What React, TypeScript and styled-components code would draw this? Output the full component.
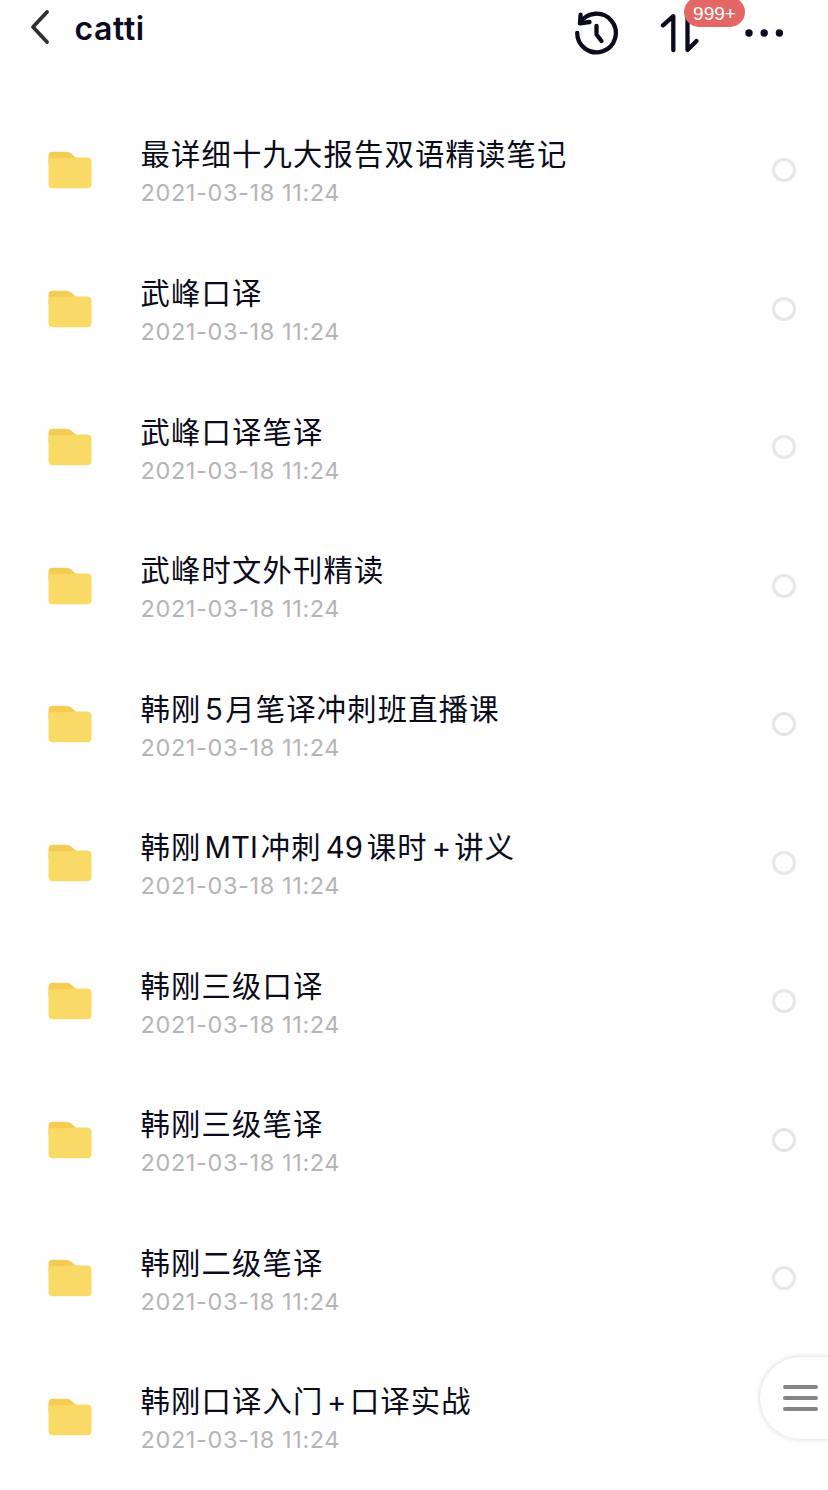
import React from 'react';
import styled, { createGlobalStyle } from 'styled-components';

const GlobalStyle = createGlobalStyle`
  * { box-sizing: border-box; }
  html, body { margin: 0; padding: 0; background: #fefefe; }
  body { font-family: Inter, "Noto Sans CJK SC", sans-serif; overflow: hidden; }
  button { border: 0; padding: 0; background: none; font: inherit; color: inherit; }
`;

const Screen = styled.div`
  width: 828px;
  height: 1490px;
  overflow: hidden;
  background: #fefefe;
`;

const Header = styled.header`
  display: flex;
  align-items: flex-start;
  height: 100.7px;
  padding: 0 44px 0 30px;
`;

const BackButton = styled.button`
  display: flex;
  width: 20px;
  height: 36px;
  margin: 9px 24.5px 0 0;
`;

const Title = styled.h1`
  flex: 1;
  margin: 0;
  padding-top: 8px;
  font-size: 32px;
  line-height: 42px;
  font-weight: 600;
  letter-spacing: 0.6px;
  color: #0b0b1f;
`;

const Actions = styled.div`
  display: flex;
  align-items: center;
  padding-top: 10px;
`;

const ActionButton = styled.button<{ $width: number; $gap?: number }>`
  position: relative;
  display: flex;
  width: ${p => p.$width}px;
  height: 46px;
  margin-left: ${p => p.$gap ?? 0}px;
`;

const Badge = styled.span`
  position: absolute;
  top: -13px;
  left: 24px;
  width: 61px;
  height: 30px;
  border-radius: 15px;
  background: #e36865;
  color: #fff;
  font-family: "Liberation Sans", Arial, sans-serif;
  font-size: 19px;
  line-height: 33px;
  text-align: center;
`;

const List = styled.ul`
  margin: 0;
  padding: 0;
  list-style: none;
`;

const Row = styled.li`
  display: flex;
  align-items: center;
  height: 138.56px;
  padding: 0 32px 0 48px;
`;

const FolderSvg = styled.svg`
  flex: none;
  width: 44px;
  height: 38px;
  margin-right: 48.5px;
`;

const Info = styled.div`
  flex: 1;
  display: flex;
  flex-direction: column;
  padding-top: 5px;
`;

const Name = styled.div`
  height: 42px;
  font-size: 29.3px;
  line-height: 43px;
  letter-spacing: 1.2px;
  white-space: nowrap;
  color: #0b0b1a;
`;

const Latin = styled.span<{ $before: number; $after: number }>`
  margin-left: ${p => p.$before}px;
  margin-right: ${p => p.$after}px;
  letter-spacing: 0;
`;

const DateText = styled.time`
  height: 36px;
  font-size: 23.5px;
  line-height: 36.6px;
  letter-spacing: 0.62px;
  color: #b4b5b7;
`;

const Radio = styled.span`
  width: 24px;
  height: 24px;
  border: 3px solid #e6e6e6;
  border-radius: 50%;
`;

const MenuButton = styled.button`
  position: absolute;
  top: 1357px;
  left: 760px;
  display: flex;
  align-items: center;
  width: 68px;
  height: 82px;
  padding-left: 22px;
  border-radius: 41px 0 0 41px;
  background: #fff;
  box-shadow: 0 0 4px 1px rgba(0, 0, 0, 0.12);
`;

const Folder = () => (
  <FolderSvg viewBox="0 0 44 38">
    <path d="M.5 14V5Q.5 .8 5 .8H18Q21 .8 23 2.4L29 7.5V14Z" fill="#f4cb55" />
    <path d="M.5 10Q.5 7.2 4 7.2H18Q21 7.2 23.5 6.6H39Q43.5 6.6 43.5 11V33Q43.5 37.3 39 37.3H5Q.5 37.3 .5 33Z" fill="#f9da66" />
  </FolderSvg>
);

type Part = string | { text: string; before: number; after: number };

const folders: Part[][] = [
  ['最详细十九大报告双语精读笔记'],
  ['武峰口译'],
  ['武峰口译笔译'],
  ['武峰时文外刊精读'],
  ['韩刚', { text: '5', before: 3.5, after: 2.5 }, '月笔译冲刺班直播课'],
  ['韩刚', { text: 'MTI', before: 3, after: 3 }, '冲刺', { text: '49', before: 4, after: 4 }, '课时', { text: '+', before: 4, after: 3 }, '讲义'],
  ['韩刚三级口译'],
  ['韩刚三级笔译'],
  ['韩刚二级笔译'],
  ['韩刚口译入门', { text: '+', before: 3.5, after: 3.5 }, '口译实战'],
];

export default function App() {
  return (
    <Screen>
      <GlobalStyle />
      <Header>
        <BackButton aria-label="返回">
          <svg width="20" height="36" viewBox="0 0 20 36" fill="none" stroke="#303033" strokeWidth="3.8" strokeLinecap="round" strokeLinejoin="round">
            <path d="M17 3L3 18L17 33" />
          </svg>
        </BackButton>
        <Title>catti</Title>
        <Actions>
          <ActionButton $width={46} aria-label="历史">
            <svg width="46" height="46" viewBox="0 0 46 46" fill="none" stroke="#0b0b1f" strokeWidth="4.3" strokeLinecap="round" strokeLinejoin="round">
              <path d="M3.2 22.8A19.3 19.3 0 1 0 6 13" />
              <path d="M6.6 4.7L6 13.3L15.5 12" />
              <path d="M22.5 16V24.5L27.5 31" />
            </svg>
          </ActionButton>
          <ActionButton $width={40} $gap={40} aria-label="排序">
            <svg width="40" height="46" viewBox="0 0 40 46" fill="none" stroke="#0b0b1f" strokeWidth="4.3" strokeLinecap="round" strokeLinejoin="round">
              <path d="M3 15.3L13.3 6.2V40.2" />
              <path d="M27.5 6V40L36.5 31" />
            </svg>
            <Badge>999+</Badge>
          </ActionButton>
          <ActionButton $width={40} $gap={44} aria-label="更多">
            <svg width="40" height="46" viewBox="0 0 40 46" fill="#0b0b1f">
              <circle cx="5" cy="23" r="3.7" />
              <circle cx="20.2" cy="23" r="3.7" />
              <circle cx="35.4" cy="23" r="3.7" />
            </svg>
          </ActionButton>
        </Actions>
      </Header>
      <List>
        {folders.map((parts, i) => (
          <Row key={i}>
            <Folder />
            <Info>
              <Name>
                {parts.map((p, j) =>
                  typeof p === 'string' ? p : (
                    <Latin key={j} $before={p.before} $after={p.after}>{p.text}</Latin>
                  )
                )}
              </Name>
              <DateText>2021-03-18 11:24</DateText>
            </Info>
            <Radio />
          </Row>
        ))}
      </List>
      <MenuButton aria-label="菜单">
        <svg width="38" height="30" viewBox="0 0 38 30" stroke="#858585" strokeWidth="4" strokeLinecap="round">
          <path d="M3 4H34M3 15H34M3 26H34" />
        </svg>
      </MenuButton>
    </Screen>
  );
}
